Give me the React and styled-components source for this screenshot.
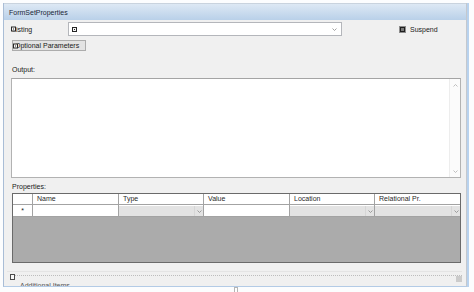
import React from 'react';
import styled, { createGlobalStyle } from 'styled-components';

const Global = createGlobalStyle`
  html, body { margin: 0; padding: 0; background: #ffffff; }
  body {
    font-family: "Liberation Sans", Arial, sans-serif;
    font-size: 7px;
    color: #1a1a1a;
  }
  * { box-sizing: border-box; }
`;

const Screen = styled.div`
  width: 474px;
  height: 292px;
  overflow: hidden;
  background: #fcfdfe;
  padding: 3px 0 0 3px;
  display: flex;
  flex-direction: column;
`;

const Window = styled.div`
  width: 464px;
  height: 284px;
  display: flex;
  flex-direction: column;
  border-left: 1px solid #a9bdd6;
  border-right: 1px solid #c4c8ce;
  border-bottom: 1px solid #b3cbe6;
  box-shadow: 2px 0 0 #b8d2ee;
`;

const TitleBar = styled.div`
  height: 17px;
  flex: none;
  display: flex;
  align-items: center;
  padding-left: 5px;
  background: linear-gradient(#dde8f4, #b9d0e9);
  border-top: 1px solid #c9d3de;
  color: #1a2636;
  font-size: 7px;
`;

const Body = styled.div`
  flex: 1;
  background: #f0f0f0;
  padding: 2px 4px 0 7px;
  display: flex;
  flex-direction: column;
`;

const Row = styled.div`
  display: flex;
  align-items: center;
  height: ${p => p.$h}px;
  margin-top: ${p => p.$mt}px;
  flex: none;
`;

const Overlaid = styled.span`
  position: relative;
  display: inline-flex;
  align-items: center;
  height: 100%;
  padding-left: ${p => p.$pl}px;
`;

const MiniBox = styled.span`
  position: absolute;
  left: ${p => p.$left}px;
  top: 50%;
  transform: translateY(-50%);
  width: 5px;
  height: 5px;
  background: #f4f4f4;
  border: 1px solid #262626;
  display: flex;
  align-items: center;
  justify-content: center;
  &::after {
    content: '';
    width: 1px;
    height: 1px;
    background: #262626;
  }
`;

const FieldLabel = styled.span`
  width: 57px;
  flex: none;
  height: 100%;
  display: flex;
  align-items: center;
`;

const Combo = styled.div`
  width: 274px;
  height: 14px;
  flex: none;
  background: #ffffff;
  border: 1px solid #b4b6bb;
  display: flex;
  align-items: center;
  justify-content: space-between;
  padding: 0 4px 0 3px;
`;

const ComboIcon = styled.span`
  width: 5px;
  height: 5px;
  border: 1px solid #262626;
  background: #f4f4f4;
  display: flex;
  align-items: center;
  justify-content: center;
  &::after {
    content: '';
    width: 1px;
    height: 1px;
    background: #262626;
  }
`;

const Suspend = styled.label`
  margin-left: 57px;
  display: flex;
  align-items: center;
  gap: 4px;
`;

const CheckBox = styled.span`
  width: 7px;
  height: 7px;
  border: 1px solid #8d8d8d;
  background: #fafafa;
  display: flex;
  align-items: center;
  justify-content: center;
  &::after {
    content: '';
    width: 3px;
    height: 3px;
    border: 1px solid #1f1f1f;
    background: #7a7a7a;
  }
`;

const Button = styled.div`
  position: relative;
  margin-left: 1px;
  height: 11px;
  width: 74px;
  background: #e3e3e3;
  border: 1px solid #acacac;
  display: flex;
  align-items: center;
  color: #1a1a1a;
`;

const Caption = styled.div`
  height: 8px;
  line-height: 8px;
  margin-top: ${p => p.$mt}px;
  margin-left: ${p => p.$ml}px;
  flex: none;
`;

const OutputBox = styled.div`
  margin-top: 4px;
  width: 450px;
  height: 100px;
  flex: none;
  background: #ffffff;
  border: 1px solid #b2b2b2;
  border-top-color: #a4a4a4;
  display: flex;
`;

const TextArea = styled.div`
  flex: 1;
`;

const ScrollBar = styled.div`
  width: 11px;
  border-left: 1px solid #ededed;
  background: #fbfbfb;
  display: flex;
  flex-direction: column;
  justify-content: space-between;
  align-items: center;
  padding: 5px 0 4px;
`;

const Grid = styled.div`
  margin-top: 2px;
  margin-left: 1px;
  width: 449px;
  height: 70px;
  flex: none;
  border: 1px solid #6a6a6a;
  background: #ababab;
  display: grid;
  grid-template-columns: 20px 86px 85px 86px 85px 1fr;
  grid-template-rows: 11px 12px;
  align-content: start;
`;

const HeadCell = styled.div`
  background: #ffffff;
  border-right: ${p => (p.$last ? 'none' : '1px solid #a3a3a3')};
  border-bottom: 1px solid #a3a3a3;
  padding-left: 4px;
  line-height: 10px;
  color: #2a2a2a;
  white-space: nowrap;
  overflow: hidden;
`;

const Cell = styled.div`
  background: #ffffff;
  border-right: ${p => (p.$last ? 'none' : '1px solid #a3a3a3')};
  border-bottom: 1px solid #a3a3a3;
  display: flex;
  align-items: center;
  justify-content: ${p => (p.$center ? 'center' : 'flex-start')};
  padding: ${p => (p.$drop ? '1px 0 0 0' : '0')};
  font-size: 7px;
`;

const DropFill = styled.div`
  flex: 1;
  height: 100%;
  background: #e3e3e3;
  display: flex;
  justify-content: flex-end;
  align-items: center;
`;

const DropBtn = styled.div`
  width: 9px;
  height: 100%;
  border-left: 1px solid #d6d6d6;
  display: flex;
  align-items: center;
  justify-content: center;
`;

const BottomPanel = styled.div`
  margin-top: 8px;
  height: 15px;
  flex: none;
  position: relative;
  overflow: hidden;
  border-top: 1px solid #e4e4e4;
  margin-left: -4px;
  padding-left: 5px;
  display: flex;
  flex-direction: column;
`;

const DottedRule = styled.div`
  margin-top: 3px;
  margin-left: 2px;
  width: 448px;
  border-top: 1px dotted #bdbdbd;
`;

const FooterIcon = styled.span`
  position: absolute;
  left: 3px;
  top: 2px;
  width: 5px;
  height: 6px;
  border: 1px solid #4a4a4a;
  background: #f7f7f7;
`;

const Grip = styled.span`
  position: absolute;
  right: 0;
  top: 4px;
  width: 6px;
  height: 6px;
  background-image: radial-gradient(#a0a0a0 0.6px, transparent 0.8px);
  background-size: 2px 2px;
`;

const ClippedText = styled.div`
  margin-top: 6px;
  margin-left: 8px;
  line-height: 8px;
  color: #555;
  white-space: nowrap;
`;

const BelowStrip = styled.div`
  height: 5px;
  display: flex;
  padding-left: 231px;
`;

const TinyBox = styled.span`
  width: 4px;
  height: 5px;
  border: 1px solid #b5b5b5;
  border-bottom: none;
  background: #ffffff;
`;

const Chevron = ({ up, color = '#9a9a9a' }) => (
  <svg width="5" height="3" viewBox="0 0 5 3">
    <polyline
      points={up ? '0.5,2.5 2.5,0.5 4.5,2.5' : '0.5,0.5 2.5,2.5 4.5,0.5'}
      fill="none"
      stroke={color}
      strokeWidth="0.8"
    />
  </svg>
);

const columns = ['Name', 'Type', 'Value', 'Location', 'Relational Pr.'];
const dropCols = { Type: true, Location: true, 'Relational Pr.': true };

export default function App() {
  return (
    <>
      <Global />
      <Screen>
        <Window>
          <TitleBar>FormSetProperties</TitleBar>
          <Body>
            <Row $h={14} $mt={0}>
              <FieldLabel>
                <Overlaid $pl={1}>
                  Listing
                  <MiniBox $left={0} />
                </Overlaid>
              </FieldLabel>
              <Combo>
                <ComboIcon />
                <Chevron color="#8a8a8a" />
              </Combo>
              <Suspend>
                <CheckBox />
                Suspend
              </Suspend>
            </Row>
            <Row $h={11} $mt={4}>
              <Button>
                <Overlaid $pl={2}>
                  Optional Parameters
                  <MiniBox $left={0} />
                </Overlaid>
              </Button>
            </Row>
            <Caption $mt={15} $ml={1}>Output:</Caption>
            <OutputBox>
              <TextArea />
              <ScrollBar>
                <Chevron up color="#b0b0b0" />
                <Chevron color="#b0b0b0" />
              </ScrollBar>
            </OutputBox>
            <Caption $mt={5} $ml={1}>Properties:</Caption>
            <Grid>
              <HeadCell />
              {columns.map((c, i) => (
                <HeadCell key={c} $last={i === columns.length - 1}>{c}</HeadCell>
              ))}
              <Cell $center>*</Cell>
              {columns.map((c, i) => (
                <Cell key={c} $drop={dropCols[c]} $last={i === columns.length - 1}>
                  {dropCols[c] && (
                    <DropFill>
                      <DropBtn>
                        <Chevron color="#8a8a8a" />
                      </DropBtn>
                    </DropFill>
                  )}
                </Cell>
              ))}
            </Grid>
            <BottomPanel>
              <FooterIcon />
              <DottedRule />
              <Grip />
              <ClippedText>Additional Items</ClippedText>
            </BottomPanel>
          </Body>
        </Window>
        <BelowStrip>
          <TinyBox />
        </BelowStrip>
      </Screen>
    </>
  );
}
